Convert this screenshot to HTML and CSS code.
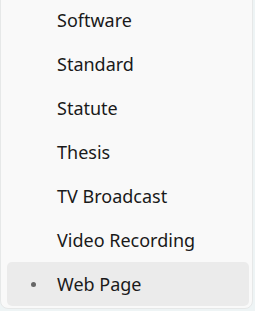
FILE: index.html
```html
<!DOCTYPE html>
<html>
<head>
<meta charset="utf-8">
<link rel="stylesheet" href="styles.css">
</head>
<body>
<div class="menu">
  <ul class="list">
    <li class="item">Software</li>
    <li class="item">Standard</li>
    <li class="item">Statute</li>
    <li class="item">Thesis</li>
    <li class="item">TV Broadcast</li>
    <li class="item">Video Recording</li>
    <li class="item selected"><span class="dot"></span>Web Page</li>
  </ul>
</div>
</body>
</html>
```
FILE: styles.css
```css
html, body {
  margin: 0;
  padding: 0;
  width: 255px;
  height: 311px;
  overflow: hidden;
  background: #eef4f5;
}
.menu {
  width: 253px;
  height: 321px;
  margin-top: -12px;
  background: #f9f9f9;
  border: 1px solid #e6e8e8;
  border-radius: 0 0 8px 8px;
  box-sizing: border-box;
  padding: 9px 3px 0 6px;
}
.list {
  list-style: none;
  margin: 0;
  padding: 0;
  display: flex;
  flex-direction: column;
}
.item {
  position: relative;
  height: 44px;
  display: flex;
  align-items: center;
  padding-left: 50px;
  font-family: "Noto Sans", "Open Sans", sans-serif;
  font-size: 18px;
  color: #1a1a1a;
  border-radius: 5px;
}
.selected {
  background: #ebebeb;
}
.dot {
  position: absolute;
  left: 24px;
  top: 20px;
  width: 5px;
  height: 5px;
  border-radius: 50%;
  background: #666;
}
```
